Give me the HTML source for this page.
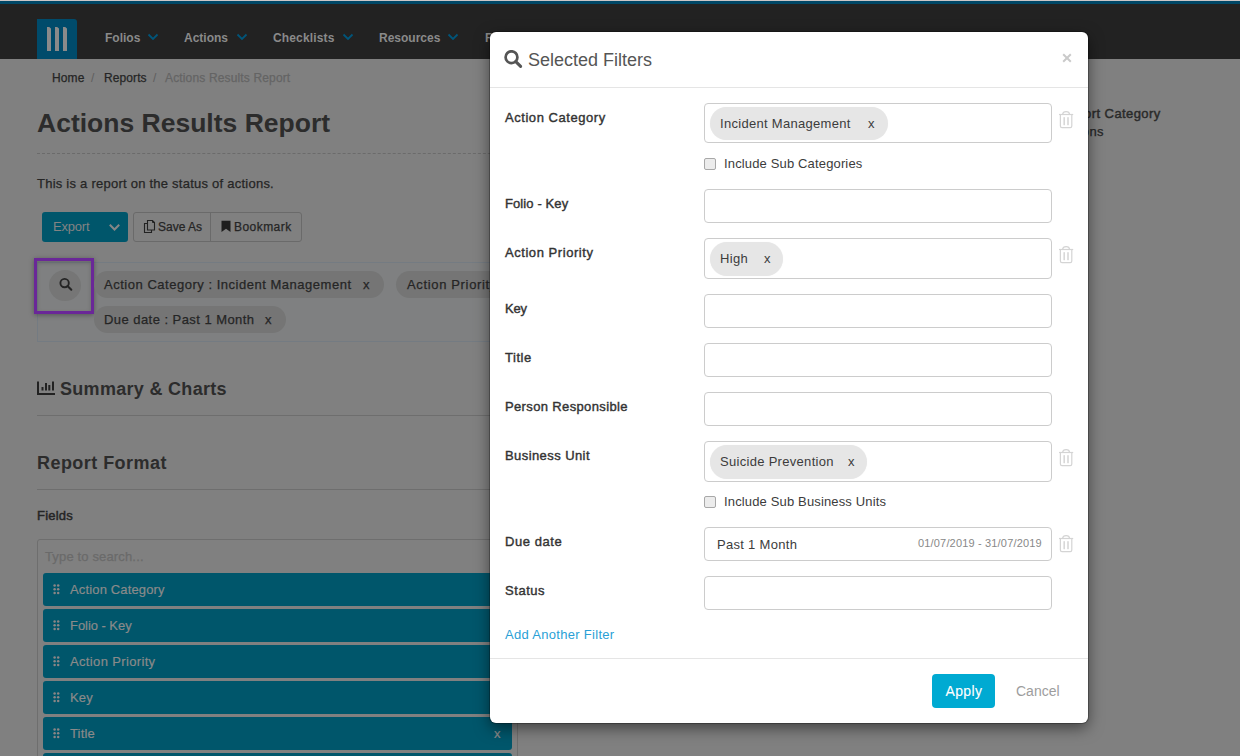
<!DOCTYPE html>
<html><head><meta charset="utf-8">
<style>
*{box-sizing:border-box;margin:0;padding:0}
html,body{width:1240px;height:756px;overflow:hidden;background:#808080;font-family:"Liberation Sans",sans-serif;position:relative}
.a{position:absolute;white-space:nowrap}
.f12{font-size:12px;line-height:12px}
.f13{font-size:13px;line-height:13px}
.f14{font-size:14px;line-height:14px}
.f18{font-size:18px;line-height:18px}
.b{font-weight:700}
.ls{letter-spacing:.3px}
#topline{left:0;top:0;width:1240px;height:1px;background:#cbc6c6}
#topblue{left:0;top:1px;width:1240px;height:3px;background:#004766}
#nav{left:0;top:4px;width:1240px;height:55px;background:#222}
#logo{left:37px;top:19px;width:40px;height:40px;background:#004b6b;border-top-right-radius:3px}
#logo i{position:absolute;top:8px;width:4px;height:24px;background:#8a8a8a;clip-path:polygon(0 0,55% 0,100% 6%,100% 100%,0 100%)}
.navi{color:#8a8a8a;top:32px}
.chev{position:absolute;top:33px}
/* page */
.dk{color:#252525}
.sk{-webkit-text-stroke:.25px currentColor}
.btn-exp{left:42px;top:212px;width:86px;height:30px;background:#00566b;border-radius:3px}
.grp{left:133px;top:212px;width:169px;height:30px;border:1px solid #6a6a6a;border-radius:3px}
.panel{left:37px;top:262px;width:1000px;height:80px;border:1px solid #747b82;background:#7f8081}
.chip{background:#757575;border-radius:14px;height:27px}
.item{left:43px;width:469px;height:32.7px;background:#00566b;border-radius:3px}
.itxt{color:#8a8a8a;-webkit-text-stroke:.2px #8a8a8a}
/* modal */
#modal{left:490px;top:32px;width:598px;height:691px;background:#fff;border-radius:6px;box-shadow:0 0 0 1px rgba(0,0,0,.25),0 5px 15px rgba(0,0,0,.5)}
.lbl{left:505px;color:#333;font-weight:400;font-size:13px;line-height:13px;letter-spacing:.55px;-webkit-text-stroke:.4px #333}
.inp{left:704px;width:348px;border:1px solid #ccc;border-radius:4px;background:#fff}
.mchip{background:#e6e6e6;border-radius:17px;height:33px;box-shadow:0 0 1px #eee}
.mtxt{color:#3c3c3c}
.cb{left:704px;width:12px;height:12px;border:1px solid #a8a8a8;border-radius:2px;background:#ececec}
.trash{position:absolute;left:1059px}
</style></head><body>
<div class="a" id="topline"></div>
<div class="a" id="topblue"></div>
<div class="a" id="nav"></div>
<div class="a" id="logo"><i style="left:10px"></i><i style="left:18px"></i><i style="left:26px"></i></div>
<div class="a navi f12 b" style="left:105px">Folios</div>
<svg class="chev" style="left:147px" width="12" height="8" viewBox="0 0 12 8"><path d="M1.5 1.5 L6 6 L10.5 1.5" fill="none" stroke="#00557a" stroke-width="1.8"/></svg>
<div class="a navi f12 b" style="left:184px">Actions</div>
<svg class="chev" style="left:236px" width="12" height="8" viewBox="0 0 12 8"><path d="M1.5 1.5 L6 6 L10.5 1.5" fill="none" stroke="#00557a" stroke-width="1.8"/></svg>
<div class="a navi f12 b" style="left:273px;letter-spacing:.15px">Checklists</div>
<svg class="chev" style="left:342px" width="12" height="8" viewBox="0 0 12 8"><path d="M1.5 1.5 L6 6 L10.5 1.5" fill="none" stroke="#00557a" stroke-width="1.8"/></svg>
<div class="a navi f12 b" style="left:379px">Resources</div>
<svg class="chev" style="left:447px" width="12" height="8" viewBox="0 0 12 8"><path d="M1.5 1.5 L6 6 L10.5 1.5" fill="none" stroke="#00557a" stroke-width="1.8"/></svg>
<div class="a navi f12 b" style="left:485px">R</div>

<!-- breadcrumb -->
<div class="a f12 dk sk" style="left:52px;top:72px;letter-spacing:.1px">Home</div>
<div class="a f12" style="left:91px;top:72px;color:#5e5e5e">/</div>
<div class="a f12 dk sk" style="left:104px;top:72px;letter-spacing:.1px">Reports</div>
<div class="a f12" style="left:153px;top:72px;color:#5e5e5e">/</div>
<div class="a f12 sk" style="left:165px;top:72px;color:#646464;letter-spacing:.15px">Actions Results Report</div>

<div class="a b" style="color:#2c2c2c;left:37px;top:110px;font-size:26.5px;line-height:26px">Actions Results Report</div>
<div class="a" style="left:37px;top:153px;width:1000px;height:0;border-top:1px dashed #6b6b6b"></div>
<div class="a f13 dk sk" style="left:37px;top:177px;letter-spacing:.24px">This is a report on the status of actions.</div>

<!-- buttons -->
<div class="a btn-exp"></div>
<div class="a f13" style="left:53px;top:220px;color:#838383;letter-spacing:-.2px">Export</div>
<svg class="a" style="left:108px;top:223px" width="13" height="9" viewBox="0 0 13 9"><path d="M1.8 1.8 L6.5 6.5 L11.2 1.8" fill="none" stroke="#868686" stroke-width="2"/></svg>
<div class="a grp"></div>
<div class="a" style="left:210px;top:212px;width:1px;height:30px;background:#6a6a6a"></div>
<svg class="a" style="left:143px;top:219px" width="14" height="15" viewBox="0 0 14 15"><path d="M4 4.5 H1.5 V13.5 H8.5 V11" fill="none" stroke="#222" stroke-width="1.1"/><path d="M4.5 1.5 H9.5 L11.5 3.5 V11 H4.5 Z" fill="none" stroke="#222" stroke-width="1.1"/><path d="M9.5 1.5 V3.5 H11.5" fill="none" stroke="#222" stroke-width="1"/></svg>
<div class="a f12 dk sk" style="left:158px;top:221px">Save As</div>
<svg class="a" style="left:221px;top:220px" width="10" height="13" viewBox="0 0 10 13"><path d="M0.5 0.7 H9.5 V12 L5 8.8 L0.5 12 Z" fill="#1e1e1e"/></svg>
<div class="a f12 dk sk" style="left:234px;top:221px;letter-spacing:.45px">Bookmark</div>

<!-- filter panel -->
<div class="a panel"></div>
<div class="a" style="left:34px;top:258px;width:60px;height:56px;border:3px solid #6a2798;box-shadow:0 1px 5px rgba(0,0,0,.35),inset 0 2px 4px rgba(0,0,0,.18)"></div>
<div class="a" style="left:49px;top:269.5px;width:32px;height:31px;border-radius:50%;background:#767676"></div>
<svg class="a" style="left:57px;top:276px" width="17" height="17" viewBox="0 0 17 17"><circle cx="7.6" cy="7.1" r="4.2" fill="none" stroke="#252525" stroke-width="1.9"/><path d="M10.5 10 L14.3 13.7" stroke="#252525" stroke-width="2.1" stroke-linecap="round"/></svg>
<div class="a chip" style="left:94px;top:271px;width:290px"></div>
<div class="a f13 dk sk" style="left:104px;top:278px;letter-spacing:.52px">Action Category : Incident Management</div>
<div class="a f13 dk sk" style="left:363px;top:278px">x</div>
<div class="a chip" style="left:396px;top:271px;width:200px"></div>
<div class="a f13 dk sk" style="left:407px;top:278px;letter-spacing:.65px">Action Priority : High</div>
<div class="a chip" style="left:94px;top:306px;width:192px"></div>
<div class="a f13 dk sk" style="left:104px;top:313px;letter-spacing:.45px">Due date : Past 1 Month</div>
<div class="a f13 dk sk" style="left:265px;top:313px">x</div>

<!-- summary -->
<svg class="a" style="left:37px;top:381px" width="18" height="14" viewBox="0 0 18 14"><path d="M0 0.5 H2 V12 H18 V14 H0 Z" fill="#222"/><rect x="4.5" y="6" width="2" height="3.5" fill="#222"/><rect x="8" y="2" width="2" height="7.5" fill="#222"/><rect x="11.3" y="4" width="2" height="5.5" fill="#222"/><rect x="15" y="0.5" width="2" height="9" fill="#222"/></svg>
<div class="a f18 b" style="color:#2c2c2c;left:60px;top:380px;letter-spacing:.3px">Summary &amp; Charts</div>
<div class="a" style="left:37px;top:415px;width:1000px;height:1px;background:#6e6e6e"></div>
<div class="a f18 b" style="color:#2c2c2c;left:37px;top:454px;letter-spacing:.45px">Report Format</div>
<div class="a" style="left:37px;top:489px;width:1000px;height:1px;background:#6e6e6e"></div>
<div class="a f13 dk" style="left:37px;top:509px;letter-spacing:.2px;-webkit-text-stroke:.45px #252525">Fields</div>

<div class="a" style="left:37px;top:539px;width:481px;height:260px;border:1px solid #6e6e6e;border-radius:3px"></div>
<div class="a f13 sk" style="left:45px;top:550px;color:#6a6a6a;letter-spacing:.15px">Type to search...</div>

<div class="a item" style="top:573px"></div>
<div class="a item" style="top:609px"></div>
<div class="a item" style="top:645px"></div>
<div class="a item" style="top:681px"></div>
<div class="a item" style="top:717px"></div>
<div class="a item" style="top:753px"></div>
<svg class="a" style="left:53px;top:584px" width="7" height="11" viewBox="0 0 7 11"><g fill="#8a8686"><circle cx="1.6" cy="1.5" r="1.25"/><circle cx="5.2" cy="1.5" r="1.25"/><circle cx="1.6" cy="5.2" r="1.25"/><circle cx="5.2" cy="5.2" r="1.25"/><circle cx="1.6" cy="9" r="1.25"/><circle cx="5.2" cy="9" r="1.25"/></g></svg>
<svg class="a" style="left:53px;top:620px" width="7" height="11" viewBox="0 0 7 11"><g fill="#8a8686"><circle cx="1.6" cy="1.5" r="1.25"/><circle cx="5.2" cy="1.5" r="1.25"/><circle cx="1.6" cy="5.2" r="1.25"/><circle cx="5.2" cy="5.2" r="1.25"/><circle cx="1.6" cy="9" r="1.25"/><circle cx="5.2" cy="9" r="1.25"/></g></svg>
<svg class="a" style="left:53px;top:656px" width="7" height="11" viewBox="0 0 7 11"><g fill="#8a8686"><circle cx="1.6" cy="1.5" r="1.25"/><circle cx="5.2" cy="1.5" r="1.25"/><circle cx="1.6" cy="5.2" r="1.25"/><circle cx="5.2" cy="5.2" r="1.25"/><circle cx="1.6" cy="9" r="1.25"/><circle cx="5.2" cy="9" r="1.25"/></g></svg>
<svg class="a" style="left:53px;top:692px" width="7" height="11" viewBox="0 0 7 11"><g fill="#8a8686"><circle cx="1.6" cy="1.5" r="1.25"/><circle cx="5.2" cy="1.5" r="1.25"/><circle cx="1.6" cy="5.2" r="1.25"/><circle cx="5.2" cy="5.2" r="1.25"/><circle cx="1.6" cy="9" r="1.25"/><circle cx="5.2" cy="9" r="1.25"/></g></svg>
<svg class="a" style="left:53px;top:728px" width="7" height="11" viewBox="0 0 7 11"><g fill="#8a8686"><circle cx="1.6" cy="1.5" r="1.25"/><circle cx="5.2" cy="1.5" r="1.25"/><circle cx="1.6" cy="5.2" r="1.25"/><circle cx="5.2" cy="5.2" r="1.25"/><circle cx="1.6" cy="9" r="1.25"/><circle cx="5.2" cy="9" r="1.25"/></g></svg>
<div class="a f13 itxt" style="letter-spacing:.15px;left:70px;top:583px">Action Category</div>
<div class="a f13 itxt" style="letter-spacing:-.05px;left:70px;top:619px">Folio - Key</div>
<div class="a f13 itxt" style="letter-spacing:.35px;left:70px;top:655px">Action Priority</div>
<div class="a f13 itxt" style="letter-spacing:.15px;left:70px;top:691px">Key</div>
<div class="a f13 itxt" style="letter-spacing:.15px;left:70px;top:727px">Title</div>
<div class="a f13 itxt" style="left:494px;top:727px">x</div>

<!-- right side behind modal -->
<div class="a f13" style="left:1059px;top:107px;letter-spacing:.42px;color:#2a2a2a;-webkit-text-stroke:.45px #2a2a2a">Report Category</div>
<div class="a f13 dk sk" style="left:1059px;top:125px;letter-spacing:.3px">Actions</div>

<!-- backdrop shading handled by colors; modal -->
<div class="a" id="modal"></div>
<svg class="a" style="left:504px;top:50px" width="19" height="19" viewBox="0 0 19 19"><circle cx="7.5" cy="7.2" r="5.9" fill="none" stroke="#555" stroke-width="2.7"/><path d="M11.8 11.6 L16.6 16.3" stroke="#555" stroke-width="3.1" stroke-linecap="round"/></svg>
<div class="a f18" style="left:528px;top:51px;color:#555">Selected Filters</div>
<svg class="a" style="left:1061.5px;top:52.5px" width="10" height="10" viewBox="0 0 10 10"><path d="M1.2 1.2 L8.8 8.8 M8.8 1.2 L1.2 8.8" stroke="#cacaca" stroke-width="2"/></svg>
<div class="a" style="left:490px;top:87px;width:598px;height:1px;background:#e5e5e5"></div>

<div class="a lbl" style="top:111px">Action Category</div>
<div class="a inp" style="top:103px;height:40px"></div>
<div class="a mchip" style="left:710px;top:107px;width:178px"></div>
<div class="a f13 mtxt ls" style="left:720px;top:117px">Incident Management</div>
<div class="a f13 mtxt" style="left:868px;top:117px">x</div>
<svg class="trash" style="top:111px" width="15" height="18" viewBox="0 0 15 18"><path d="M0 3.5 H14.2" stroke="#d4d4d4" stroke-width="1.2"/><path d="M3.6 3.5 C3.8 1 4.8 0.6 7.1 0.6 C9.4 0.6 10.4 1 10.6 3.5" fill="none" stroke="#d4d4d4" stroke-width="1.2"/><path d="M1.4 3.5 V15 Q1.4 16.6 3 16.6 H11.2 Q12.8 16.6 12.8 15 V3.5" fill="none" stroke="#d4d4d4" stroke-width="1.2"/><rect x="4.4" y="6.2" width="1.6" height="8" fill="#d8d8d8"/><rect x="8.2" y="6.2" width="1.6" height="8" fill="#d8d8d8"/></svg>
<div class="a cb" style="top:158px"></div>
<div class="a f13 mtxt" style="left:724px;top:157px;letter-spacing:.15px">Include Sub Categories</div>

<div class="a lbl" style="top:197px;letter-spacing:.1px">Folio - Key</div>
<div class="a inp" style="top:189px;height:34px"></div>

<div class="a lbl" style="top:246px">Action Priority</div>
<div class="a inp" style="top:238px;height:41px"></div>
<div class="a mchip" style="left:710px;top:242px;width:73px;height:34px"></div>
<div class="a f13 mtxt ls" style="left:720px;top:252px">High</div>
<div class="a f13 mtxt" style="left:764px;top:252px">x</div>

<svg class="trash" style="top:246px" width="15" height="18" viewBox="0 0 15 18"><path d="M0 3.5 H14.2" stroke="#d4d4d4" stroke-width="1.2"/><path d="M3.6 3.5 C3.8 1 4.8 0.6 7.1 0.6 C9.4 0.6 10.4 1 10.6 3.5" fill="none" stroke="#d4d4d4" stroke-width="1.2"/><path d="M1.4 3.5 V15 Q1.4 16.6 3 16.6 H11.2 Q12.8 16.6 12.8 15 V3.5" fill="none" stroke="#d4d4d4" stroke-width="1.2"/><rect x="4.4" y="6.2" width="1.6" height="8" fill="#d8d8d8"/><rect x="8.2" y="6.2" width="1.6" height="8" fill="#d8d8d8"/></svg>
<div class="a lbl" style="top:302px;letter-spacing:-.2px">Key</div>
<div class="a inp" style="top:294px;height:34px"></div>

<div class="a lbl" style="top:351px">Title</div>
<div class="a inp" style="top:343px;height:34px"></div>

<div class="a lbl" style="top:400px;letter-spacing:.36px">Person Responsible</div>
<div class="a inp" style="top:392px;height:34px"></div>

<div class="a lbl" style="top:449px;letter-spacing:.42px">Business Unit</div>
<div class="a inp" style="top:441px;height:41px"></div>
<div class="a mchip" style="left:710px;top:445px;width:157px;height:34px"></div>
<div class="a f13 mtxt ls" style="left:720px;top:455px">Suicide Prevention</div>
<div class="a f13 mtxt" style="left:848px;top:455px">x</div>
<svg class="trash" style="top:449px" width="15" height="18" viewBox="0 0 15 18"><path d="M0 3.5 H14.2" stroke="#d4d4d4" stroke-width="1.2"/><path d="M3.6 3.5 C3.8 1 4.8 0.6 7.1 0.6 C9.4 0.6 10.4 1 10.6 3.5" fill="none" stroke="#d4d4d4" stroke-width="1.2"/><path d="M1.4 3.5 V15 Q1.4 16.6 3 16.6 H11.2 Q12.8 16.6 12.8 15 V3.5" fill="none" stroke="#d4d4d4" stroke-width="1.2"/><rect x="4.4" y="6.2" width="1.6" height="8" fill="#d8d8d8"/><rect x="8.2" y="6.2" width="1.6" height="8" fill="#d8d8d8"/></svg>
<div class="a cb" style="top:496px"></div>
<div class="a f13 mtxt" style="left:724px;top:495px;letter-spacing:.15px">Include Sub Business Units</div>

<div class="a lbl" style="top:535px">Due date</div>
<div class="a inp" style="top:527px;height:34px"></div>
<div class="a f13 mtxt ls" style="left:717px;top:538px">Past 1 Month</div>
<div class="a" style="left:918px;top:538px;font-size:11px;line-height:11px;color:#888;letter-spacing:.17px">01/07/2019 - 31/07/2019</div>

<svg class="trash" style="top:535px" width="15" height="18" viewBox="0 0 15 18"><path d="M0 3.5 H14.2" stroke="#d4d4d4" stroke-width="1.2"/><path d="M3.6 3.5 C3.8 1 4.8 0.6 7.1 0.6 C9.4 0.6 10.4 1 10.6 3.5" fill="none" stroke="#d4d4d4" stroke-width="1.2"/><path d="M1.4 3.5 V15 Q1.4 16.6 3 16.6 H11.2 Q12.8 16.6 12.8 15 V3.5" fill="none" stroke="#d4d4d4" stroke-width="1.2"/><rect x="4.4" y="6.2" width="1.6" height="8" fill="#d8d8d8"/><rect x="8.2" y="6.2" width="1.6" height="8" fill="#d8d8d8"/></svg>
<div class="a lbl" style="top:584px">Status</div>
<div class="a inp" style="top:576px;height:34px"></div>

<div class="a f13" style="left:505px;top:628px;color:#2a9fd6;letter-spacing:.3px">Add Another Filter</div>
<div class="a" style="left:490px;top:658px;width:598px;height:1px;background:#e5e5e5"></div>
<div class="a" style="left:932px;top:674px;width:63px;height:34px;background:#00aad2;border-radius:4px"></div>
<div class="a f14" style="left:945.5px;top:684px;color:#fff;letter-spacing:.35px;-webkit-text-stroke:.1px #fff">Apply</div>
<div class="a f14" style="left:1016px;top:684px;color:#9d9d9d">Cancel</div>

</body></html>
